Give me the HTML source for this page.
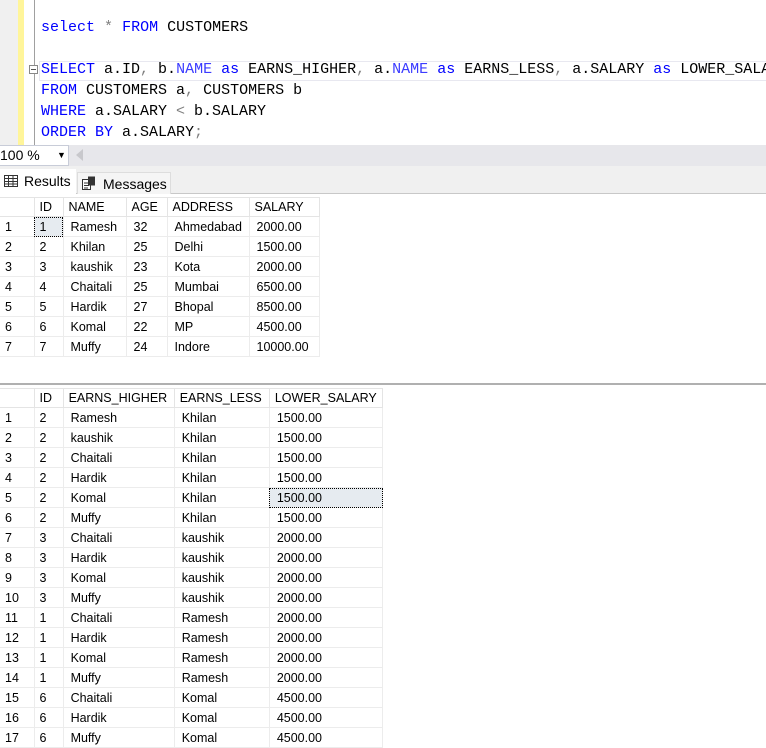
<!DOCTYPE html>
<html><head><meta charset="utf-8"><style>
*{margin:0;padding:0;box-sizing:border-box}
body{width:766px;height:743px;overflow:hidden;background:#fff;position:relative;font-family:"Liberation Sans",sans-serif}
.abs{position:absolute}
.code{font-family:"Liberation Mono",monospace;font-size:15px;color:#000;white-space:pre;line-height:21px}
.k{color:#0000ff}.n{color:#3c3cff}.g{color:#808080}
table{border-collapse:collapse;position:absolute;left:0;font-size:12.5px;color:#000;table-layout:fixed}
td{height:20px;border:1px solid #ececec;padding:0 0 0 7px;white-space:nowrap;overflow:hidden}
tr.h td{height:19px;background:#fff;border-color:#e4e4e4;padding-left:5px}
td.r{padding-left:5px;border-left:none}
</style></head><body>
<div class="abs" style="left:0;top:0;width:18px;height:145px;background:#f0f0f0"></div>
<div class="abs" style="left:18px;top:0;width:6px;height:145px;background:#fff59a"></div>
<div class="abs" style="left:24px;top:0;width:10px;height:145px;background:#fff"></div>
<div class="abs" style="left:34px;top:0;width:1px;height:145px;background:#a0a0a0"></div>
<div class="abs" style="left:39px;top:61px;width:727px;height:20px;border:1px solid #e8e8f0;border-right:none"></div>
<div class="abs" style="left:29px;top:65px;width:9px;height:9px;border:1px solid #888;background:#fff"><div style="position:absolute;left:1px;top:3px;width:5px;height:1px;background:#555"></div></div>
<div class="abs code" style="left:41px;top:17px"><span class="k">select</span> <span class="g">*</span> <span class="k">FROM</span> CUSTOMERS</div>
<div class="abs code" style="left:41px;top:59px"><span class="k">SELECT</span> a.ID<span class="g">,</span> b.<span class="n">NAME</span> <span class="k">as</span> EARNS_HIGHER<span class="g">,</span> a.<span class="n">NAME</span> <span class="k">as</span> EARNS_LESS<span class="g">,</span> a.SALARY <span class="k">as</span> LOWER_SALARY
<span class="k">FROM</span> CUSTOMERS a<span class="g">,</span> CUSTOMERS b
<span class="k">WHERE</span> a.SALARY <span class="g">&lt;</span> b.SALARY
<span class="k">ORDER BY</span> a.SALARY<span class="g">;</span></div>
<div class="abs" style="left:0;top:145px;width:766px;height:21px;background:#e7e7eb"></div>
<div class="abs" style="left:0;top:145px;width:69px;height:21px;background:#fff;border:1px solid #c8ccd8;border-left:none;font-size:14px;line-height:19px">100 %<span style="position:absolute;left:57px;top:0;font-size:9px">▼</span></div>
<div class="abs" style="left:76px;top:149px;width:0;height:0;border-top:6px solid transparent;border-bottom:6px solid transparent;border-right:7px solid #c8c8cc"></div>
<div class="abs" style="left:0;top:166px;width:766px;height:28px;background:#f0f0f0;border-bottom:1px solid #c8c8c8"></div>
<div class="abs" style="left:0;top:169px;width:76px;height:26px;background:#fff;font-size:14px;line-height:24px;padding-left:24px">Results</div>
<svg class="abs" style="left:4px;top:175px" width="14" height="12"><rect x="0.5" y="0.5" width="13" height="11" fill="none" stroke="#333"/><path d="M0 3.5H14M0 6.5H14M0 9H14M4.5 0V12M9 0V12" stroke="#333"/></svg>
<div class="abs" style="left:77px;top:172px;width:94px;height:22px;background:#f5f5f5;border:1px solid #ddd;border-bottom:none;font-size:14px;line-height:22px;padding-left:25px">Messages</div>
<svg class="abs" style="left:82px;top:176px" width="14" height="14"><rect x="0.5" y="3.5" width="8" height="10" fill="#fff" stroke="#333"/><rect x="6" y="0.5" width="7" height="9" fill="#333"/><path d="M2 7H7M2 9.5H7M2 12H6" stroke="#333"/></svg>
<table style="top:197px;width:319px">
<colgroup><col style="width:34px"><col style="width:29px"><col style="width:63px"><col style="width:41px"><col style="width:82px"><col style="width:70px"></colgroup>
<tr class="h"><td style="border-left:none"></td><td>ID</td><td>NAME</td><td>AGE</td><td>ADDRESS</td><td>SALARY</td></tr>
<tr><td class="r">1</td><td style="background:#e6ebf0;outline:1px dotted #000;outline-offset:-1px;padding-left:5px">1</td><td>Ramesh</td><td>32</td><td>Ahmedabad</td><td>2000.00</td></tr>
<tr><td class="r">2</td><td style="padding-left:5px">2</td><td>Khilan</td><td>25</td><td>Delhi</td><td>1500.00</td></tr>
<tr><td class="r">3</td><td style="padding-left:5px">3</td><td>kaushik</td><td>23</td><td>Kota</td><td>2000.00</td></tr>
<tr><td class="r">4</td><td style="padding-left:5px">4</td><td>Chaitali</td><td>25</td><td>Mumbai</td><td>6500.00</td></tr>
<tr><td class="r">5</td><td style="padding-left:5px">5</td><td>Hardik</td><td>27</td><td>Bhopal</td><td>8500.00</td></tr>
<tr><td class="r">6</td><td style="padding-left:5px">6</td><td>Komal</td><td>22</td><td>MP</td><td>4500.00</td></tr>
<tr><td class="r">7</td><td style="padding-left:5px">7</td><td>Muffy</td><td>24</td><td>Indore</td><td>10000.00</td></tr>
</table>
<div class="abs" style="left:0;top:383px;width:766px;height:2px;background:#b0b0b0"></div>
<table style="top:388px;width:383px">
<colgroup><col style="width:34px"><col style="width:29px"><col style="width:111px"><col style="width:95px"><col style="width:113px"></colgroup>
<tr class="h"><td style="border-left:none"></td><td>ID</td><td>EARNS_HIGHER</td><td>EARNS_LESS</td><td>LOWER_SALARY</td></tr>
<tr><td class="r">1</td><td style="padding-left:5px">2</td><td>Ramesh</td><td>Khilan</td><td>1500.00</td></tr>
<tr><td class="r">2</td><td style="padding-left:5px">2</td><td>kaushik</td><td>Khilan</td><td>1500.00</td></tr>
<tr><td class="r">3</td><td style="padding-left:5px">2</td><td>Chaitali</td><td>Khilan</td><td>1500.00</td></tr>
<tr><td class="r">4</td><td style="padding-left:5px">2</td><td>Hardik</td><td>Khilan</td><td>1500.00</td></tr>
<tr><td class="r">5</td><td style="padding-left:5px">2</td><td>Komal</td><td>Khilan</td><td style="background:#e6ebf0;outline:1px dotted #000;outline-offset:-1px">1500.00</td></tr>
<tr><td class="r">6</td><td style="padding-left:5px">2</td><td>Muffy</td><td>Khilan</td><td>1500.00</td></tr>
<tr><td class="r">7</td><td style="padding-left:5px">3</td><td>Chaitali</td><td>kaushik</td><td>2000.00</td></tr>
<tr><td class="r">8</td><td style="padding-left:5px">3</td><td>Hardik</td><td>kaushik</td><td>2000.00</td></tr>
<tr><td class="r">9</td><td style="padding-left:5px">3</td><td>Komal</td><td>kaushik</td><td>2000.00</td></tr>
<tr><td class="r">10</td><td style="padding-left:5px">3</td><td>Muffy</td><td>kaushik</td><td>2000.00</td></tr>
<tr><td class="r">11</td><td style="padding-left:5px">1</td><td>Chaitali</td><td>Ramesh</td><td>2000.00</td></tr>
<tr><td class="r">12</td><td style="padding-left:5px">1</td><td>Hardik</td><td>Ramesh</td><td>2000.00</td></tr>
<tr><td class="r">13</td><td style="padding-left:5px">1</td><td>Komal</td><td>Ramesh</td><td>2000.00</td></tr>
<tr><td class="r">14</td><td style="padding-left:5px">1</td><td>Muffy</td><td>Ramesh</td><td>2000.00</td></tr>
<tr><td class="r">15</td><td style="padding-left:5px">6</td><td>Chaitali</td><td>Komal</td><td>4500.00</td></tr>
<tr><td class="r">16</td><td style="padding-left:5px">6</td><td>Hardik</td><td>Komal</td><td>4500.00</td></tr>
<tr><td class="r">17</td><td style="padding-left:5px">6</td><td>Muffy</td><td>Komal</td><td>4500.00</td></tr>
</table>
</body></html>
